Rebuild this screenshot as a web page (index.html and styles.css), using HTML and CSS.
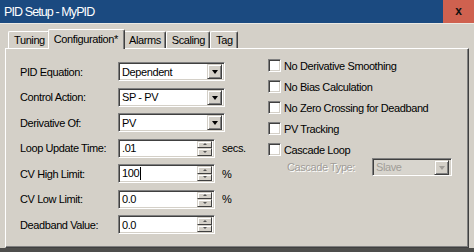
FILE: index.html
```html
<!DOCTYPE html>
<html>
<head>
<meta charset="utf-8">
<title>PID Setup - MyPID</title>
<link rel="stylesheet" href="styles.css">
</head>
<body>
<div class="titlebar">
	<span class="title">PID Setup - MyPID</span>
	<span class="close">x</span>
</div>
<div class="main">
	<div class="tabs">
		<div class="tab">Tuning</div>
		<div class="tab active">Configuration*</div>
		<div class="tab">Alarms</div>
		<div class="tab">Scaling</div>
		<div class="tab">Tag</div>
	</div>
	<div class="panel">
		<div class="left">
			<div class="row"><span class="label">PID Equation:</span><div class="select"><span>Dependent</span><span class="arrow"><i></i></span></div></div>
			<div class="row"><span class="label">Control Action:</span><div class="select"><span>SP - PV</span><span class="arrow"><i></i></span></div></div>
			<div class="row"><span class="label">Derivative Of:</span><div class="select"><span>PV</span><span class="arrow"><i></i></span></div></div>
			<div class="row"><span class="label">Loop Update Time:</span><div class="spin"><span>.01</span><span class="btns"><b class="up"><i></i></b><b class="down"><i></i></b></span></div><span class="unit">secs.</span></div>
			<div class="row"><span class="label">CV High Limit:</span><div class="spin"><span>100<em class="caret"></em></span><span class="btns"><b class="up"><i></i></b><b class="down"><i></i></b></span></div><span class="unit">%</span></div>
			<div class="row"><span class="label">CV Low Limit:</span><div class="spin"><span>0.0</span><span class="btns"><b class="up"><i></i></b><b class="down"><i></i></b></span></div><span class="unit">%</span></div>
			<div class="row"><span class="label">Deadband Value:</span><div class="spin"><span>0.0</span><span class="btns"><b class="up"><i></i></b><b class="down"><i></i></b></span></div></div>
		</div>
		<div class="right">
			<div class="checks">
				<div class="check"><span class="box"></span>No Derivative Smoothing</div>
				<div class="check"><span class="box"></span>No Bias Calculation</div>
				<div class="check"><span class="box"></span>No Zero Crossing for Deadband</div>
				<div class="check"><span class="box"></span>PV Tracking</div>
				<div class="check"><span class="box"></span>Cascade Loop</div>
			</div>
			<div class="cascade">
				<span class="dim">Cascade Type:</span>
				<div class="select disabled"><span>Slave</span><span class="arrow"><i></i></span></div>
			</div>
		</div>
	</div>
</div>
<div class="frame-bottom"></div>
</body>
</html>
```

FILE: styles.css
```css
*{ margin:0; padding:0; box-sizing:border-box;}
body{ background:#d4d0c8; font-family:"Liberation Sans", Arial, sans-serif; font-size:11px; letter-spacing:-0.4px; color:#000; width:474px; height:252px; overflow:hidden;}

/* title bar */
.titlebar{ height:24px; background:#1b4a80; border-bottom:1px solid #ebe9e3; display:flex; justify-content:space-between; align-items:stretch;}
.title{ color:#fff; font-size:12.5px; letter-spacing:-0.9px; padding:5px 0 0 4px;}
.close{ width:31px; background:#cf614f; color:#111; font-weight:bold; font-size:12px; letter-spacing:0; display:flex; align-items:center; justify-content:center; padding-bottom:2px;}

/* tabs */
.main{ padding:5px 5px 0 5px;}
.tabs{ display:flex; align-items:flex-end; height:19px; padding-left:3px; position:relative; z-index:1;}
.tab{ height:17px; padding:2px 4px 0 5px; border-top:1px solid #fff; border-left:1px solid #fff; border-right:1px solid #404040; box-shadow:inset -1px 0 #808080; border-radius:2px 2px 0 0; background:#d4d0c8;}
.tab.active{ height:20px; margin:0 -2px -1px -2px; padding:3px 6px 0 5px; position:relative; z-index:2;}

/* panel */
.panel{ height:200px; border-top:1px solid #fff; border-left:1px solid #fff; border-right:1px solid #404040; border-bottom:1px solid #404040; box-shadow:inset -1px -1px #808080; display:flex; padding:13px 0 0 14px;}
.left{ width:248px; display:grid; grid-auto-rows:19px; row-gap:6.5px; align-content:start;}
.row{ display:flex; align-items:center;}
.label{ width:98px;}
.unit{ margin-left:7px;}

.select, .spin{ height:19px; background:#fff; border:1px solid; border-color:#808080 #fff #fff #808080; box-shadow:inset 1px 1px #404040, inset -1px -1px #d4d0c8; display:flex; justify-content:space-between; align-items:center; padding-left:3px;}
.select{ width:107px;}
.spin{ width:97px;}
.arrow{ width:15px; height:15px; margin-right:2px; background:#d4d0c8; border:1px solid; border-color:#d4d0c8 #404040 #404040 #d4d0c8; box-shadow:inset 1px 1px #fff, inset -1px -1px #808080; display:flex; align-items:center; justify-content:center;}
.arrow i{ width:0; height:0; border-left:3.5px solid transparent; border-right:3.5px solid transparent; border-top:4px solid #000; margin-top:1px;}

.btns{ width:15px; height:15px; margin-right:2px; display:flex; flex-direction:column;}
.btns b{ flex:1; background:#d4d0c8; border:1px solid; border-color:#d4d0c8 #404040 #404040 #d4d0c8; box-shadow:inset 1px 1px #fff; display:flex; align-items:center; justify-content:center;}
.btns .up i{ width:0; height:0; border-left:2.5px solid transparent; border-right:2.5px solid transparent; border-bottom:2px solid #555;}
.btns .down i{ width:0; height:0; border-left:2.5px solid transparent; border-right:2.5px solid transparent; border-top:2px solid #555;}
.caret{ display:inline-block; width:1px; height:13px; background:#000; vertical-align:-3px; margin-left:1px;}

/* right column */
.right{ margin-top:-3px;}
.checks{ display:flex; flex-direction:column; gap:8px;}
.check{ height:13px; display:flex; align-items:center;}
.box{ width:13px; height:13px; margin-right:3px; background:#fff; border:1px solid; border-color:#808080 #fff #fff #808080; box-shadow:inset 1px 1px #404040, inset -1px -1px #d4d0c8;}
.cascade{ display:flex; align-items:center; margin-top:2px;}
.dim{ width:104px; padding-left:19px; color:#a09d98; text-shadow:1px 1px #fff;}
.select.disabled{ width:80px; height:18px; background:#d8d5ce; color:#a09d98;}
.select.disabled .arrow i{ border-top-color:#a09d98;}

.frame-bottom{ height:4px; background:#4e4e4c;}
```
